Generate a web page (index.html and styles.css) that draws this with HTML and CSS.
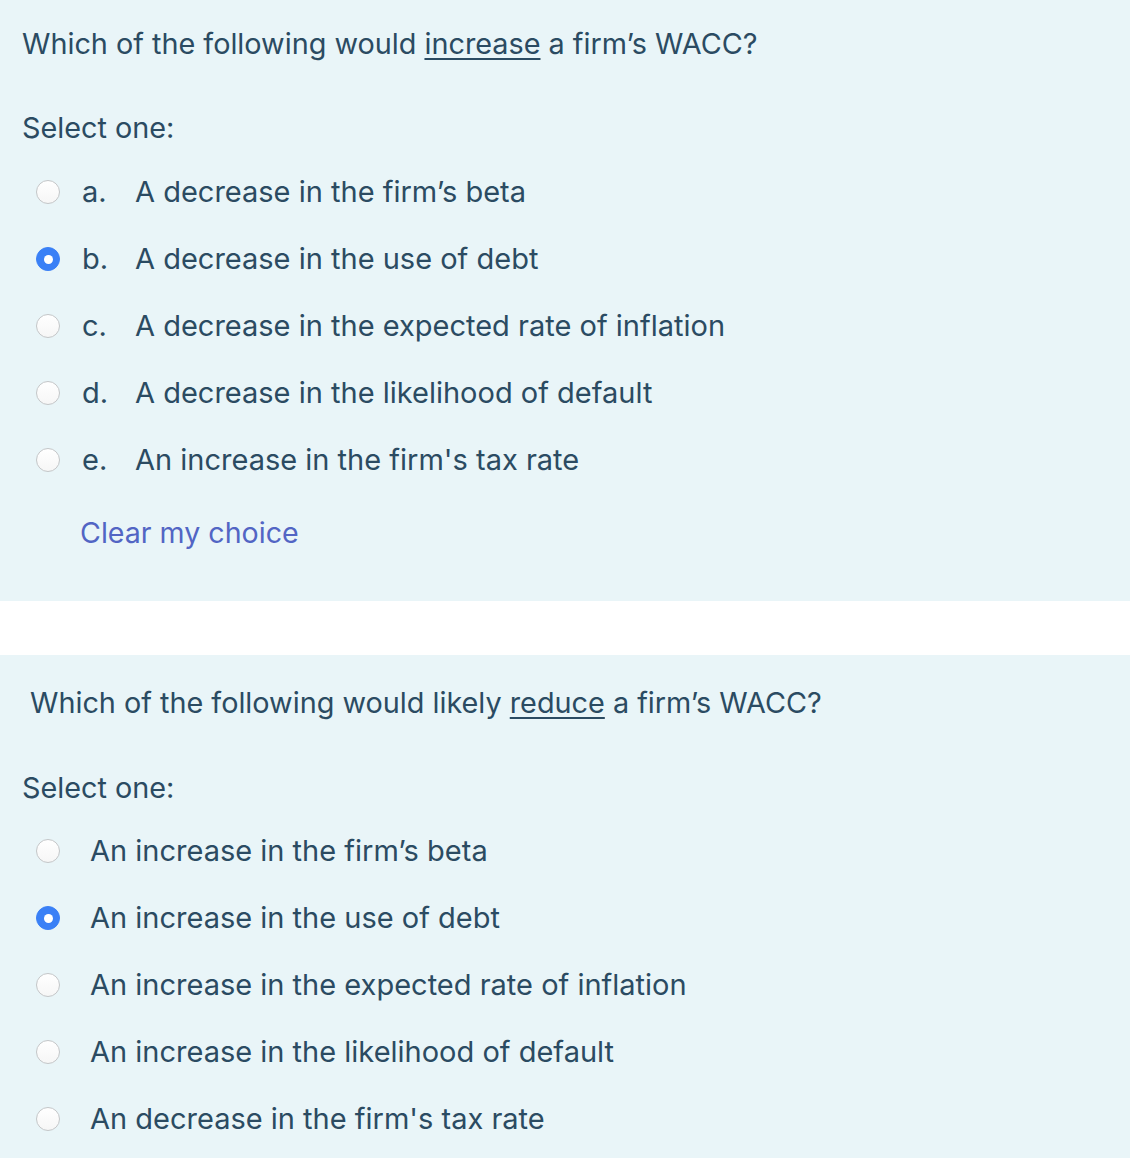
FILE: index.html
```html
<!DOCTYPE html>
<html>
    <head>
        <link rel="stylesheet" href="styles.css">
    </head>
    <body>
        <div class="que first">
            <div class="qtext">Which of the following would <u>increase</u> a firm’s WACC?</div>
            <div class="prompt">Select one:</div>
            <div class="answers">
                <div class="row"><span class="radio"></span><span class="num">a.</span><span class="label">A decrease in the firm’s beta</span></div>
                <div class="row"><span class="radio checked"></span><span class="num">b.</span><span class="label">A decrease in the use of debt</span></div>
                <div class="row"><span class="radio"></span><span class="num">c.</span><span class="label">A decrease in the expected rate of inflation</span></div>
                <div class="row"><span class="radio"></span><span class="num">d.</span><span class="label">A decrease in the likelihood of default</span></div>
                <div class="row"><span class="radio"></span><span class="num">e.</span><span class="label">An increase in the firm's tax rate</span></div>
            </div>
            <div class="clear"><a href="#">Clear my choice</a></div>
        </div>

        <div class="que second">
            <div class="qtext">Which of the following would likely <u>reduce</u> a firm’s WACC?</div>
            <div class="prompt">Select one:</div>
            <div class="answers plain">
                <div class="row"><span class="radio"></span><span class="label">An increase in the firm’s beta</span></div>
                <div class="row"><span class="radio checked"></span><span class="label">An increase in the use of debt</span></div>
                <div class="row"><span class="radio"></span><span class="label">An increase in the expected rate of inflation</span></div>
                <div class="row"><span class="radio"></span><span class="label">An increase in the likelihood of default</span></div>
                <div class="row"><span class="radio"></span><span class="label">An decrease in the firm's tax rate</span></div>
            </div>
        </div>
    </body>
</html>
```

FILE: styles.css
```css
body {
    margin: 0;
    background: #ffffff;
    font-family: Inter, "Noto Sans", sans-serif;
    color: #2b4b62;
}

.que {
    background: #e9f5f8;
    padding: 24px 22px 48px 22px;
}

.second {
    margin-top: 54px;
    padding-top: 28px;
}

.qtext {
    font-size: 28.8px;
    line-height: 40px;
}

.second .qtext {
    padding-left: 8px;
}

.qtext u {
    text-decoration-thickness: 2px;
    text-underline-offset: 4px;
}

.prompt {
    font-size: 28.8px;
    line-height: 40px;
    margin-top: 44px;
}

.second .prompt {
    margin-top: 45px;
}

.answers {
    margin-top: 10px;
}

.second .answers {
    margin-top: 9px;
}

.row {
    display: flex;
    align-items: center;
    height: 67px;
    font-size: 29px;
}

.radio {
    width: 22px;
    height: 22px;
    border-radius: 50%;
    border: 1px solid #c4c6c8;
    background: linear-gradient(#ffffff, #f6f6f6);
    margin-left: 14px;
    flex-shrink: 0;
    box-sizing: content-box;
}

.radio.checked {
    border-color: #3a80f6;
    background: #3a80f6;
    position: relative;
}

.radio.checked::after {
    content: "";
    position: absolute;
    left: 7px;
    top: 7px;
    width: 9px;
    height: 9px;
    border-radius: 50%;
    background: #ffffff;
}

.num {
    width: 53px;
    margin-left: 22px;
}

.label {
    white-space: nowrap;
}

.plain .label {
    margin-left: 30px;
}

.clear {
    margin-top: 20px;
    padding-left: 58px;
    font-size: 28.6px;
    line-height: 40px;
}

.clear a {
    color: #5265c4;
    text-decoration: none;
}
```
